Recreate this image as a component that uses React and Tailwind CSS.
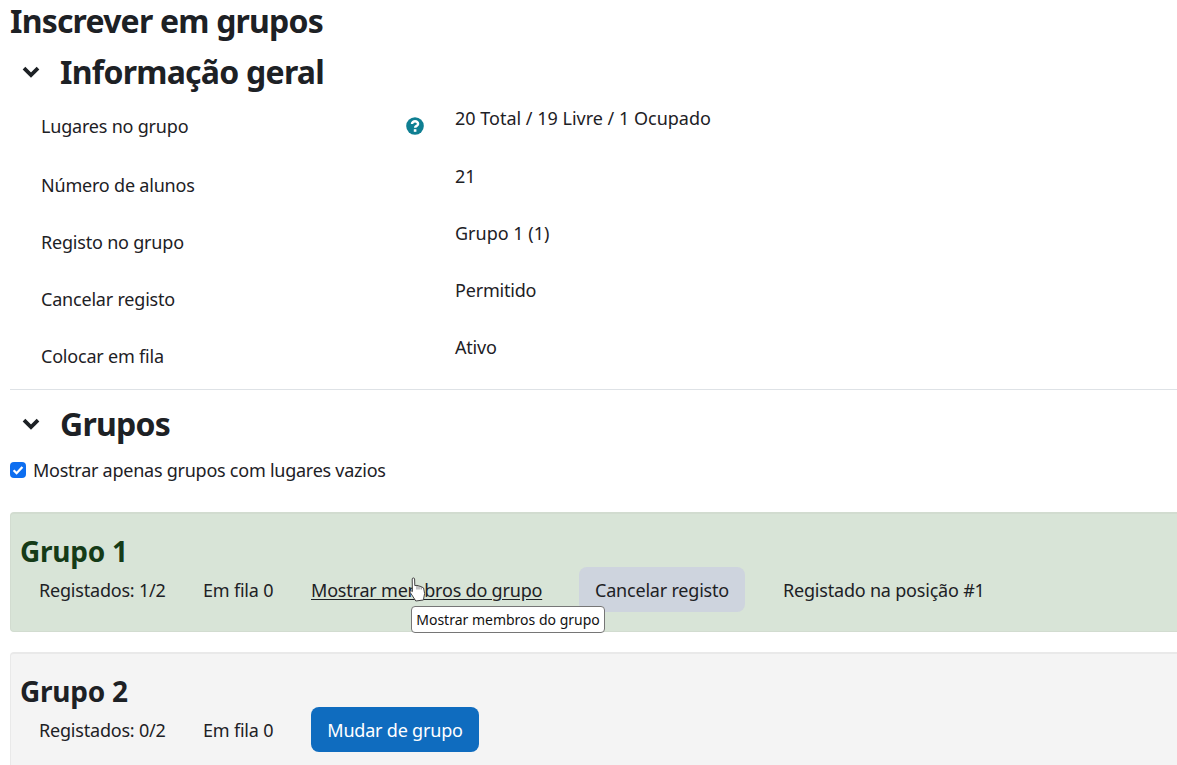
import React from "react";

const font = { fontFamily: '"Noto Sans", sans-serif' };

function Chevron() {
  return (
    <svg width="18" height="12" viewBox="0 0 18 12" className="block">
      <path d="M2 2.2 L9 9 L16 2.2" fill="none" stroke="#1d2125" strokeWidth="3.8" />
    </svg>
  );
}

function Section({ children }) {
  return (
    <div className="flex items-center h-[40px]">
      <div className="w-[50px] pl-[12px]"><Chevron /></div>
      <h3 className="text-[32px] leading-[40px] font-bold tracking-[-0.75px] text-[#1d2125]">{children}</h3>
    </div>
  );
}

function Row({ label, value, help, h, numeric }) {
  return (
    <div className={`flex ${h} text-[#1d2125]`}>
      <div className="w-[365px] pl-[31px] pt-[8px] leading-[24px] tracking-[-0.2px]">{label}</div>
      <div className="w-[50px] pt-[8px] flex justify-start">
        {help && (
          <svg width="18" height="18" viewBox="0 0 18 18" className="mt-[3px] ml-[31px] shrink-0">
            <circle cx="9" cy="9" r="8.8" fill="#0f7f92" />
            <path d="M6 7 C6 3.3 12.1 3.3 12.1 7 C12.1 9 9.1 8.8 9.1 10.8" fill="none" stroke="#fff" strokeWidth="2.4" />
            <rect x="7.8" y="12.2" width="2.6" height="2.6" fill="#fff" />
          </svg>
        )}
      </div>
      <div className={`pl-[30px] leading-[24px] ${help ? "" : "-mt-px"} ${numeric ? "" : "tracking-[-0.2px]"}`}>{value}</div>
    </div>
  );
}

function Cursor() {
  return (
    <svg width="17" height="26" viewBox="0 0 17 26" className="absolute left-[409px] top-[577px]">
      <path
        d="M3.2 2 C3.2 .6 5.6 .6 5.6 2 L5.8 8.6 L8 8.4 L10 9 L12.2 9.6 L14.6 11 L15.6 16.5 L14.4 23 L6.8 24 L1.2 15.4 C.6 14.2 2 13.2 3.4 14.6 Z"
        fill="#fff"
        stroke="#444"
        strokeWidth="1"
      />
      <path d="M8 9 V12.5 M10 9.4 V12.5 M12.2 10 V12.5" stroke="#555" strokeWidth=".7" />
    </svg>
  );
}

function Info({ children, w }) {
  return <span className={`${w} shrink-0 tracking-[-0.2px]`}>{children}</span>;
}

export default function App() {
  return (
    <div className="relative h-[765px] w-[1177px] overflow-hidden bg-white text-[18px] text-[#1d2125]" style={font}>
      <div className="pl-[10px] w-[1200px]">
        <h2 className="h-[52px] pt-[2px] text-[32px] leading-[38px] font-bold tracking-[-0.8px]">Inscrever em grupos</h2>
        <Section>Informação geral</Section>
        <div className="pt-[14px]">
          <Row h="h-[59px]" label="Lugares no grupo" value="20 Total / 19 Livre / 1 Ocupado" help numeric />
          <Row h="h-[57px]" label="Número de alunos" value="21" numeric />
          <Row h="h-[57px]" label="Registo no grupo" value="Grupo 1 (1)" numeric />
          <Row h="h-[57px]" label="Cancelar registo" value="Permitido" />
          <Row h="h-[53px]" label="Colocar em fila" value="Ativo" />
        </div>
        <div className="border-t border-[#dee2e6] h-[15px]" />
        <Section>Grupos</Section>
        <label className="flex items-center h-[24px] mt-[14px] tracking-[-0.25px]">
          <span className="w-[16px] h-[16px] rounded-[4px] bg-[#0d6ef0] flex items-center justify-center mr-[7px]">
            <svg width="12" height="12" viewBox="0 0 12 12">
              <path d="M1.6 6.2 L4.6 9.2 L10.4 3" fill="none" stroke="#fff" strokeWidth="2.3" />
            </svg>
          </span>
          Mostrar apenas grupos com lugares vazios
        </label>
        <div className="mt-[30px] h-[120px] rounded-[4px] border-t-2 border-l border-b border-[#d2dcd0] bg-[#d8e4d7] pl-[9px] pt-[21px]">
          <h4 className="text-[28px] leading-[32px] font-bold tracking-[-0.25px] text-[#153b17]">Grupo 1</h4>
          <div className="flex items-center h-[45px] pl-[19px] mt-[1px]">
            <Info w="w-[164px]">Registados: 1/2</Info>
            <Info w="w-[108px]">Em fila 0</Info>
            <span className="w-[268px] shrink-0 underline underline-offset-2 tracking-[-0.2px]">Mostrar membros do grupo</span>
            <span className="w-[166px] h-[45px] pt-[2px] shrink-0 -translate-y-px rounded-[8px] bg-[#ced4de] flex items-center justify-center tracking-[-0.2px]">Cancelar registo</span>
            <span className="ml-[38px] tracking-[-0.2px]">Registado na posição #1</span>
          </div>
        </div>
        <div className="mt-[20px] h-[140px] rounded-[4px] border-t-2 border-l border-[#e9e9e9] bg-[#f4f4f4] pl-[9px] pt-[21px]">
          <h4 className="text-[28px] leading-[32px] font-bold tracking-[-0.25px]">Grupo 2</h4>
          <div className="flex items-center h-[45px] pl-[19px] mt-[1px]">
            <Info w="w-[164px]">Registados: 0/2</Info>
            <Info w="w-[108px]">Em fila 0</Info>
            <span className="w-[168px] h-[45px] pt-[2px] shrink-0 -translate-y-px rounded-[8px] bg-[#0f6cbf] text-white flex items-center justify-center tracking-[-0.2px]">Mudar de grupo</span>
          </div>
        </div>
      </div>
      <Cursor />
      <div className="absolute left-[411px] top-[606px] h-[27px] w-[194px] rounded-[4px] border border-[#767676] bg-white text-[14px] leading-[25px] text-center text-[#111]">
        Mostrar membros do grupo
      </div>
    </div>
  );
}
